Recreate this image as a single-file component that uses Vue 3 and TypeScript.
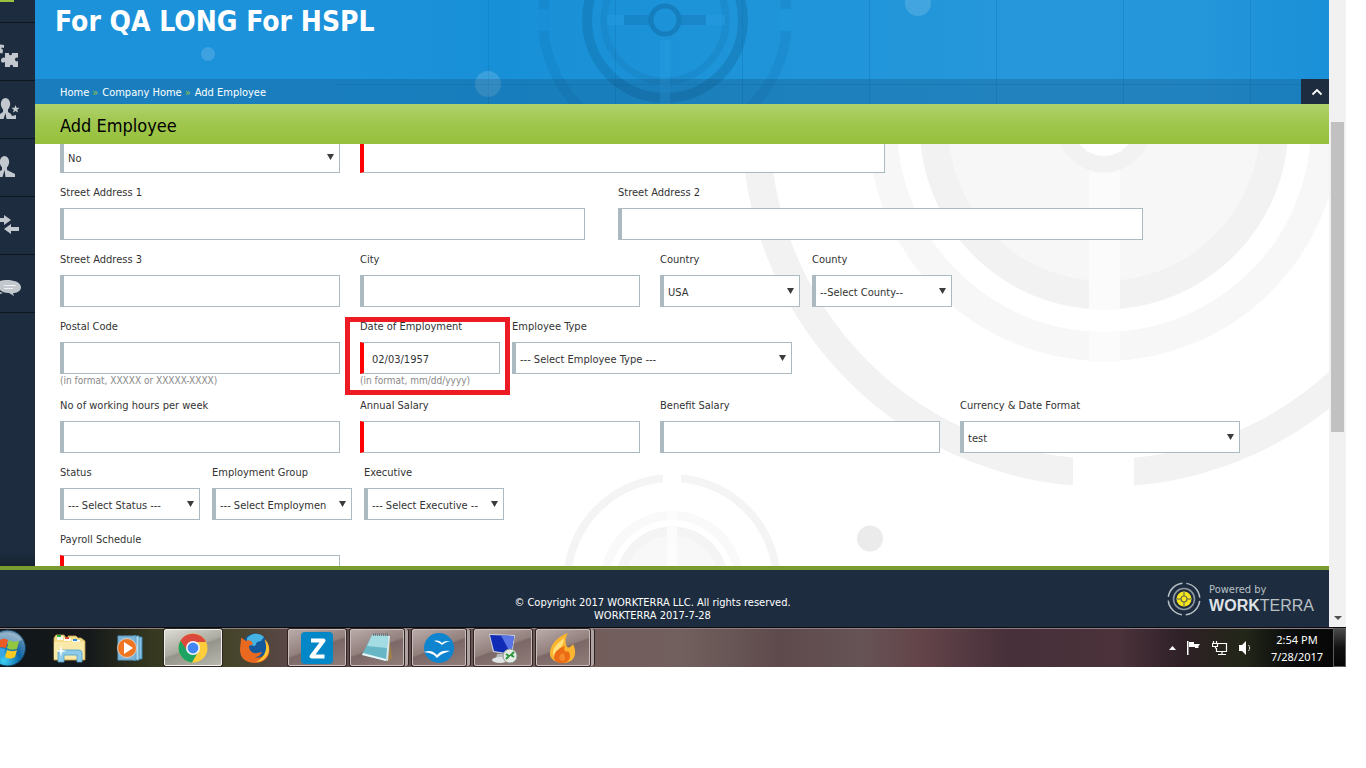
<script setup lang="ts">
interface Field {
  id: string
  label: string
  kind: 'text' | 'select'
  size: 'narrow' | 'mid' | 'wide'
  value?: string
  required?: boolean
  hint?: string
  marked?: boolean
  bare?: boolean
}

const rows: Field[][] = [
  [
    { id: 'opt', label: 'Option', kind: 'select', size: 'mid', value: 'No', bare: true },
    { id: 'detail', label: 'Details', kind: 'text', size: 'wide', required: true, bare: true },
  ],
  [
    { id: 'street1', label: 'Street Address 1', kind: 'text', size: 'wide' },
    { id: 'street2', label: 'Street Address 2', kind: 'text', size: 'wide' },
  ],
  [
    { id: 'street3', label: 'Street Address 3', kind: 'text', size: 'mid' },
    { id: 'city', label: 'City', kind: 'text', size: 'mid' },
    { id: 'country', label: 'Country', kind: 'select', size: 'narrow', value: 'USA' },
    { id: 'county', label: 'County', kind: 'select', size: 'narrow', value: '--Select County--' },
  ],
  [
    { id: 'postal', label: 'Postal Code', kind: 'text', size: 'mid', hint: '(in format, XXXXX or XXXXX-XXXX)' },
    { id: 'hired', label: 'Date of Employment', kind: 'text', size: 'narrow', value: '02/03/1957', required: true, hint: '(in format, mm/dd/yyyy)', marked: true },
    { id: 'type', label: 'Employee Type', kind: 'select', size: 'mid', value: '--- Select Employee Type ---' },
  ],
  [
    { id: 'hours', label: 'No of working hours per week', kind: 'text', size: 'mid' },
    { id: 'annual', label: 'Annual Salary', kind: 'text', size: 'mid', required: true },
    { id: 'benefit', label: 'Benefit Salary', kind: 'text', size: 'mid' },
    { id: 'currency', label: 'Currency & Date Format', kind: 'select', size: 'mid', value: 'test' },
  ],
  [
    { id: 'status', label: 'Status', kind: 'select', size: 'narrow', value: '--- Select Status ---' },
    { id: 'group', label: 'Employment Group', kind: 'select', size: 'narrow', value: '--- Select Employment Group ---' },
    { id: 'exec', label: 'Executive', kind: 'select', size: 'narrow', value: '--- Select Executive ---' },
  ],
  [{ id: 'payroll', label: 'Payroll Schedule', kind: 'text', size: 'mid', required: true }],
]

const gridLines = [453, 580, 707, 834, 961, 1088, 1215]
</script>

<template>
  <div class="screen">
    <div class="browser">
      <div class="page">
        <div class="upper">
          <nav class="side" aria-label="Sections">
            <a href="#" class="side-item first" aria-label="Dashboard"><span class="tab"></span></a>
            <a href="#" class="side-item" aria-label="Modules">
              <svg width="35" height="57" viewBox="0 23 35 57" fill="#c2c8ce">
                <path d="M0 44.500l4 .500v3l-2-.500c-1.500 1 0 2 1 2l-.500 4-2.500-.500z" />
                <path d="M5 53h4c-.8 3 3.500 3 3 0h6v5c-1.500-1-3 0-3 1.500s1.500 2.500 3 1.500v6h-5c.8-3-3.800-3-3 0H5v-5c-1.500 1-4 1-4-1.500S3.500 57 5 58z" />
              </svg>
            </a>
            <a href="#" class="side-item" aria-label="Featured employee">
              <svg width="35" height="57" viewBox="0 81 35 57" fill="#c2c8ce">
                <ellipse cx="5.500" cy="104" rx="4.700" ry="6" />
                <path d="M3 108h5v4l3 2 1 2 4-1v4H6.500l-1-6-2 6H0v-5l3-2z" />
                <path d="M15.500 105l1 2.800h3l-2.300 1.900.9 2.900-2.600-1.700-2.600 1.700.9-2.900-2.300-1.900h3z" />
              </svg>
            </a>
            <a href="#" class="side-item" aria-label="Employees">
              <svg width="35" height="57" viewBox="0 139 35 57" fill="#c2c8ce">
                <ellipse cx="4.500" cy="162" rx="4.700" ry="6" />
                <path d="M2 166h5v4l8 4v3H5.500l-1-7-2 7H0v-6l2-1z" />
              </svg>
            </a>
            <a href="#" class="side-item" aria-label="Transfers">
              <svg width="35" height="57" viewBox="0 197 35 57" fill="#c2c8ce">
                <path d="M0 218h4v-3l7 5-7 5v-3H0zM19 227h-8v-3l-7 5 7 5v-3h8z" />
              </svg>
            </a>
            <a href="#" class="side-item" aria-label="Messages">
              <svg width="35" height="57" viewBox="0 255 35 57" fill="#c2c8ce">
                <path d="M0 281c7-2 20-1 21 6 0 4-4 6-8 6l1 3-5-3c-4 0-7-1-9-3z" />
                <path d="M0 294l3-1-3-1z" />
                <path d="M4 285.500h12M4 288.500h9" stroke="#eef0f2" fill="none" />
              </svg>
            </a>
            <div class="side-end"></div>
          </nav>

          <main class="main">
            <header class="banner">
              <svg class="banner-art" width="1294" height="104" viewBox="0 0 1294 104" aria-hidden="true">
                <g stroke="#0b6fae" stroke-opacity=".3" fill="none">
                  <path v-for="x in gridLines" :key="x" :d="`M${x + .5} 0V104`" />
                  <path d="M300 84.500H1294" />
                </g>
                <g fill="none" stroke="#0b5c91">
                  <circle cx="630" cy="20" r="122" stroke-width="10" stroke-opacity=".13" />
                  <circle cx="630" cy="20" r="78" stroke-width="10" stroke-opacity=".28" />
                  <circle cx="630" cy="20" r="61" stroke-width="7" stroke-opacity=".14" />
                  <circle cx="630" cy="20" r="14" stroke-width="5" stroke-opacity=".36" />
                  <path d="M589 20h25M646 20h25" stroke-width="10" stroke-opacity=".2" />
                </g>
                <path d="M572 20h17M671 20h19M630 40v64" stroke="#249ae0" stroke-width="10" stroke-opacity=".6" />
                <path d="M503 9h12v22h-12z" fill="#188fd7" />
                <path d="M744 9h14v22h-14z" fill="#1f95da" />
                <g fill="#b7dcf3" fill-opacity=".22">
                  <circle cx="173" cy="54" r="7" /><circle cx="453" cy="84" r="13" /><circle cx="883" cy="3" r="13" />
                </g>
              </svg>
              <h1 class="company">For QA LONG For HSPL</h1>
              <div class="trail-bar">
                <nav class="trail" aria-label="Breadcrumb">
                  <a href="#">Home</a><i>»</i><a href="#">Company Home</a><i>»</i><a href="#">Add Employee</a>
                </nav>
                <button class="collapse" type="button" aria-label="Collapse header">
                  <svg width="12" height="8" viewBox="0 0 12 8"><path d="M1.500 6.500L6 2l4.500 4.500" fill="none" stroke="#fff" stroke-width="1.800" /></svg>
                </button>
              </div>
            </header>
            <h2 class="title">Add Employee</h2>

            <form class="form" @submit.prevent>
              <svg class="form-art" width="1294" height="422" viewBox="35 144 1294 422" aria-hidden="true">
                <circle cx="1104" cy="125" r="348" fill="none" stroke="#f2f2f2" stroke-width="28" />
                <path d="M1073 450h61v50h-61z" fill="#fff" />
                <circle cx="1104" cy="125" r="236" fill="#f7f7f7" />
                <circle cx="1104" cy="125" r="207" fill="#fff" />
                <circle cx="1104" cy="125" r="184.500" fill="#f2f2f2" />
                <circle cx="1104" cy="125" r="156" fill="#f7f7f7" />
                <path d="M1089 150h31v159h-31zM1089 332h31v30h-31z" fill="#fbfbfb" />
                <circle cx="1104" cy="125" r="47.500" fill="#f2f2f2" />
                <circle cx="1104" cy="125" r="31" fill="#fff" />
                <circle cx="672" cy="583" r="105" fill="none" stroke="#f4f4f4" stroke-width="8" />
                <path d="M663 470h18v20h-18z" fill="#fff" />
                <circle cx="672" cy="583" r="72" fill="#f9f9f9" />
                <circle cx="672" cy="583" r="63" fill="#fff" />
                <circle cx="672" cy="583" r="56.500" fill="#f4f4f4" />
                <circle cx="672" cy="583" r="47.500" fill="#f8f8f8" />
                <path d="M667 511h10v9h-10zM667 527h10v50h-10z" fill="#fcfcfc" />
                <circle cx="870" cy="538.500" r="13" fill="#ebebeb" />
              </svg>
              <div v-for="(row, n) in rows" :key="n" class="row">
                <div v-for="f in row" :key="f.id" class="field" :class="[f.size, { marked: f.marked }]">
                  <label v-if="!f.bare" :for="f.id">{{ f.label }}</label>
                  <span v-if="f.kind === 'select'" class="pick">
                    <select :id="f.id" class="control" :aria-label="f.bare ? f.label : undefined"><option>{{ f.value }}</option></select>
                  </span>
                  <input v-else :id="f.id" type="text" class="control" :class="{ required: f.required }" :value="f.value" :aria-label="f.bare ? f.label : undefined" />
                  <small v-if="f.hint">{{ f.hint }}</small>
                </div>
              </div>
            </form>
          </main>
        </div>

        <footer class="footer">
          <p class="legal">© Copyright 2017 WORKTERRA LLC. All rights reserved.<br />WORKTERRA 2017-7-28</p>
          <div class="brand">
            <svg width="34" height="34" viewBox="0 0 34 34" fill="none">
              <circle cx="17" cy="17" r="15.800" stroke="#b9bfc5" stroke-width="1.500" stroke-dasharray="20.800 4" stroke-dashoffset="-2" />
              <circle cx="17" cy="17" r="10.500" stroke="#8d959d" stroke-width="1.600" />
              <circle cx="17" cy="17" r="7.500" fill="#f7e51d" />
              <path d="M17 9v16M9 17h16" stroke="#8b8c4a" stroke-width="1.500" />
              <circle cx="17" cy="17" r="3" fill="#f7e51d" stroke="#6b6f48" stroke-width="1.200" />
            </svg>
            <div class="brand-text"><span>Powered by</span><strong>WORK<em>TERRA</em></strong></div>
          </div>
        </footer>
      </div>
      <div class="scroll" aria-hidden="true"><span class="thumb"></span><span class="down"></span></div>
    </div>

    <div class="taskbar">
      <button class="start" type="button" aria-label="Start">
        <svg width="26" height="40" viewBox="0 0 26 40">
          <defs><radialGradient id="orb" cx=".4" cy=".85" r=".9"><stop offset="0" stop-color="#3fd0f5" /><stop offset=".5" stop-color="#0c65a8" /><stop offset="1" stop-color="#7d9bb0" /></radialGradient></defs>
          <circle cx="7.500" cy="20" r="18" fill="url(#orb)" stroke="#123a58" />
          <path d="M-8 11C-2 2 17 2 22 12 12 17 2 17-8 15z" fill="#fff" fill-opacity=".35" />
          <path d="M0 12c3-2 6-1 8 0l-2 8c-3-1-5-1-8 0z" fill="#ee5a24" />
          <path d="M9 12c3 2 6 2 10 1l-2 8c-4 1-7 1-10-1z" fill="#93c83e" />
          <path d="M-3 21c3-1 6-1 8 0l-2 8c-3-1-4-1-6-1z" fill="#39a5e6" />
          <path d="M7 22c3 1 6 2 10 0l-2 7c-4 2-7 2-10 0z" fill="#fbc920" />
        </svg>
      </button>
      <button class="app plain folder" type="button" aria-label="Explorer">
        <svg width="34" height="32" viewBox="0 0 34 32">
          <path d="M2 28V6l2-3h8l2 3h2V4h8l2 2h3l4 3v19z" fill="#f3dc8a" stroke="#c9a653" stroke-width=".8" />
          <path d="M2 10h30v17H2z" fill="#f8e9a9" /><path d="M5 4h6v4H5zM12 6h7v3h-7zM20 8h8v2h-8z" fill="#fffdf0" />
          <path d="M5 3h4v2H5z" fill="#25b33b" /><path d="M13 5h4v2h-4z" fill="#df4a32" /><path d="M21 7h4v2h-4z" fill="#2e8bd6" />
          <path d="M6 30v-9c0-3 2-3 4-3h16c3 0 4 1 4 3v9h-5v-7H12v7z" fill="#8dcbe8" stroke="#4c9fc9" stroke-width=".8" />
          <path d="M9 13l1 5 5 1-5 1-1 5-1-5-4-1 4-1z" fill="#fff" />
        </svg>
      </button>
      <button class="app plain media" type="button" aria-label="Media player">
        <svg width="28" height="28" viewBox="0 0 28 28">
          <path d="M19 3h7v22h-7z" fill="#8ec5e6" stroke="#3681ae" /><path d="M17 2h6v24h-6z" fill="#b4dbef" stroke="#4c95be" />
          <path d="M2 2h18v24H2z" fill="#7fb6d8" stroke="#5c9cc4" />
          <circle cx="11" cy="14" r="9.500" fill="#f07521" stroke="#d8dfe5" stroke-width=".8" /><path d="M8 8l9 6-9 6z" fill="#fff" />
        </svg>
      </button>
      <button class="app active" type="button" aria-label="Chrome">
        <svg width="30" height="30" viewBox="0 0 30 30">
          <circle cx="15" cy="15" r="14.500" fill="#fdcd3b" />
          <path d="M2.400 7.800A14.500 14.500 0 0 1 28 9H15L8.700 18.500z" fill="#dc4a3d" />
          <path d="M2.400 7.800A14.500 14.500 0 0 0 14 29.500l6-10.500H10z" fill="#1da362" />
          <circle cx="15" cy="15" r="7" fill="#f4f6f8" /><circle cx="15" cy="15" r="5.400" fill="#4285f4" />
        </svg>
      </button>
      <button class="app plain fox" type="button" aria-label="Firefox">
        <svg width="32" height="32" viewBox="0 0 32 32">
          <circle cx="16" cy="14" r="12.500" fill="#14599b" /><path d="M8 6c4-5 12-6 17-1l-3 4-4 1-2 4-5-1-3-3z" fill="#45b4e4" />
          <path d="M2 6c2 0 3 2 5 3 3-2 6 0 7 3l-4 2c0 5 4 8 8 7 2 0 3-1 5-1-1 3-4 5-7 5 5 2 11-1 12-9 0-3-1-6-3-8 5 3 6 8 5 13-1 6-7 10-14 10C7 31 1 26 1 18c0-5 1-7 1-12z" fill="#e8691f" />
          <path d="M26 7c4 5 5 10 3 15-2 5-7 8-12 8 6-3 11-9 10-17z" fill="#fcc535" />
        </svg>
      </button>
      <button class="app" type="button" aria-label="Zimbra">
        <svg width="32" height="32" viewBox="0 0 32 32"><rect width="32" height="32" rx="4" fill="#0387c6" /><path d="M10 8.500h12.500L10.500 24.500H23.500" fill="none" stroke="#fff" stroke-width="4" stroke-linejoin="round" /></svg>
      </button>
      <button class="app stacked" type="button" aria-label="Notepad">
        <svg width="32" height="32" viewBox="0 0 32 32">
          <path d="M28 4l3 22-4 4z" fill="#a28148" /><path d="M12 3l17 1-2 25-8-2z" fill="#d7e9ec" />
          <path d="M11 3l16 1-2 25L1 23z" fill="#66b6c5" /><path d="M11 3l16 1-1 12L6 14z" fill="#a4dce4" />
          <path d="M1 23l24 6v-2L2 21z" fill="#e7f5f6" /><path d="M12 2.500h16" stroke="#6e7b80" stroke-width="3" stroke-dasharray="1 1" />
        </svg>
      </button>
      <button class="app stacked" type="button" aria-label="OpenOffice">
        <svg width="32" height="32" viewBox="0 0 32 32"><circle cx="16" cy="16" r="15" fill="#0f84cf" /><path d="M11 9c4-1 6 0 8 2 2-2 5-2 8-2-4 1-5 2-8 4-2-2-4-3-8-4zM1 20c6-2 9-1 13 3 3-4 7-5 13-4-6 2-9 3-13 7-3-4-7-5-13-6z" fill="#fff" /></svg>
      </button>
      <button class="app" type="button" aria-label="Remote desktop">
        <svg width="32" height="32" viewBox="0 0 32 32">
          <path d="M10 22h7l1 5H9z" fill="#b6bcc0" /><ellipse cx="13" cy="28" rx="8" ry="3" fill="#dfe3e4" /><path d="M2 2l26 1-3 20-19-3z" fill="#cdd4dc" /><path d="M3 3l24 1-3 18-17-3z" fill="#102bb5" /><path d="M14 3.500l13 .5-3 18z" fill="#5874e6" />
          <circle cx="23" cy="24" r="7" fill="#e6ebe6" stroke="#8c9690" /><path d="M19 22l3 2-3 3M27 20l-3 3 3 2" fill="none" stroke="#289638" stroke-width="2" />
        </svg>
      </button>
      <button class="app stacked" type="button" aria-label="Burn">
        <svg width="32" height="32" viewBox="0 0 32 32">
          <path d="M21 1C12 4 4 11 3 20c-1 7 6 11 13 11 8 0 13-5 12-12 0-2-1-5-2-7-2 3-4 4-6 3-2-4-2-9 1-14z" fill="#fbb52f" />
          <path d="M17 6c-5 5-11 8-11 15 0 2 1 4 2 5 0-8 9-9 9-20z" fill="#ffe07a" />
          <path d="M18 14c-6 2-11 6-11 11 0 4 4 6 8 6 5 0 8-3 8-7 0-2-1-4-2-5-1 1-2 1-3 0-1-2-1-3 0-5z" fill="#ec6b15" />
          <path d="M17 21c-4 1-6 4-4 7 2 2 6 1 5-2z" fill="#f58a2c" />
        </svg>
      </button>

      <div class="tray">
        <svg width="7" height="4" viewBox="0 0 7 4"><path d="M0 4l3.500-4L7 4z" fill="#fff" /></svg>
        <svg width="16" height="16" viewBox="0 0 16 16" fill="#fff"><path d="M1 1h1.500v14H1zM3 2h5v2h6l-2 3 1 1H9V7H3z" /></svg>
        <svg width="16" height="16" viewBox="0 0 16 16" fill="none" stroke="#fff"><path d="M6 3.500h8.500v8H4.500V8M6 14.500h8M10 12v2M1.500 1v3M4.500 1v3M.5 3.500h5v3h-5zM3.500 6.500v2" stroke-width="1.200" /></svg>
        <svg width="14" height="16" viewBox="0 0 14 16"><path d="M1 5h3l4-4v14l-4-4H1z" fill="#fff" /><path d="M10.500 5c1.500 2 1.500 4 0 6" fill="none" stroke="#ddd" /></svg>
      </div>
      <div class="clock"><span>2:54 PM</span><span>7/28/2017</span></div>
      <button class="show-desktop" type="button" aria-label="Show desktop"></button>
    </div>
  </div>
</template>

<style>
body { margin: 0; background: #fff; }
</style>

<style scoped>
*, *::after { box-sizing: border-box; }
.screen { display: flex; flex-direction: column; height: calc(100vh - 101px); margin-right: 20px; overflow: hidden; font-family: "DejaVu Sans Condensed", "DejaVu Sans", sans-serif; font-size: 11px; color: #333; }
.browser { flex: 1; min-height: 0; display: flex; }
.page { flex: 1; min-width: 0; display: flex; flex-direction: column; }
.upper { flex: 1; min-height: 0; display: flex; }
button { border: 0; padding: 0; background: none; display: flex; align-items: center; justify-content: center; }
a { color: inherit; text-decoration: none; }
svg { display: block; flex: none; }

.side { width: 35px; flex: none; display: flex; flex-direction: column; background: #1d2d3f; overflow: hidden; }
.side-item { height: 58px; flex: none; border-bottom: 1px solid #0d151f; }
.side-item.first { height: 23px; }
.tab { display: block; width: 14px; height: 2px; background: #99c23f; }
.side-end { flex: 1; background: linear-gradient(#1d2d3f 94%, #17222f); }

.main { flex: 1; min-width: 0; display: flex; flex-direction: column; }
.banner { position: relative; flex: none; display: flex; flex-direction: column; overflow: hidden; background: linear-gradient(90deg, #1c92da 0%, #1c92da 22%, #1890d7 36%, #2095d9 60%, #2697da 78%, #2496da 90%, #1a90d8 100%); }
.banner-art { position: absolute; left: 0; top: 0; }
.company { position: relative; margin: 0; height: 79px; padding: 5px 20px; font-size: 28px; line-height: 34px; font-weight: bold; color: #fff; }
.trail-bar { position: relative; height: 25px; display: flex; justify-content: space-between; background: rgba(20, 50, 80, .2); }
.trail { display: flex; align-items: center; padding: 1px 0 0 25px; color: #fff; }
.trail i { width: 13px; padding-left: 3px; font-style: normal; color: #99c23f; }
.collapse { width: 28px; background: #1d2d3f; padding-left: 4px; }
.title { flex: none; height: 40px; margin: 0; padding: 4px 25px 0; font-size: 18px; line-height: 36px; font-weight: normal; color: #000; background: linear-gradient(#b0d16c, #9fc74c 50%, #97c03d); }

.form { position: relative; flex: 1; min-height: 0; overflow: hidden; padding-left: 25px; }
.form-art { position: absolute; right: 0; top: 0; }
.row { display: flex; align-items: flex-start; }
.row:nth-of-type(1) { margin-top: -3px; }
.field { position: relative; display: flex; flex-direction: column; flex: none; }
.narrow { width: 140px; margin-right: 12px; }
.mid { width: 280px; margin-right: 20px; }
.wide { width: 525px; margin-right: 33px; }
label { height: 35px; padding-top: 4px; line-height: 31px; white-space: nowrap; }
.control { width: 100%; height: 32px; margin: 0; padding: 2px 8px 0; border: 1px solid #abb9c1; border-left-width: 4px; border-radius: 0; background: #fff; font: inherit; color: #333; outline: 0; appearance: none; }
.control.required { border-left-color: #f00; }
.pick { position: relative; display: block; }
.pick .control { padding: 2px 25px 0 4px; text-overflow: clip; }
.pick::after { content: ""; position: absolute; right: 6px; top: 13px; width: 7px; height: 6px; background: #3c3c3c; clip-path: polygon(0 0, 100% 0, 50% 100%); pointer-events: none; }
small { height: 12px; padding-top: 1px; font-size: 10px; line-height: 12px; color: #888; white-space: nowrap; }
.marked::after { content: ""; position: absolute; left: -15px; top: 10px; width: 165px; height: 78px; border: 5px solid #ed1c24; pointer-events: none; }

.footer { flex: none; height: 61px; display: grid; grid-template-columns: 1fr auto 1fr; padding-right: 15px; border-top: 4px solid #7a9b2e; background: #1d2d3f; color: #fff; }
.legal { grid-column: 2; margin: 0; padding: 26px 9px 0 0; line-height: 13px; text-align: center; }
.brand { display: flex; justify-content: flex-end; align-items: flex-start; gap: 8px; padding-top: 12px; }
.brand-text { display: flex; flex-direction: column; padding-top: 1px; font-family: "Liberation Sans", sans-serif; color: #dfe3e6; }
.brand-text span { font-family: "DejaVu Sans Condensed", sans-serif; line-height: 14px; color: #b9c0c6; }
.brand-text strong { font-size: 16px; line-height: 18px; }
.brand-text em { font-style: normal; font-weight: normal; color: #b9c0c6; }

.scroll { position: relative; width: 17px; flex: none; padding: 122px 2px 0; background: #f1f1f1; }
.thumb { display: block; height: 310px; background: #c1c1c1; }
.down { position: absolute; left: 5px; bottom: 7px; width: 8px; height: 4px; background: #505050; clip-path: polygon(0 0, 100% 0, 50% 100%); }

.taskbar { flex: none; height: 40px; display: flex; align-items: stretch; border-top: 1px solid #0c0c10; box-shadow: inset 0 1px #8c8080; background: linear-gradient(90deg, #11161b 0, #15191a 90px, #35371f 150px, #45442a 230px, #5b4748 290px, #725c5a 560px, #72605e 680px, #5e4a4c 780px, #665355 860px, #634449 920px, #47303a 1010px, #4b323b 1120px, #2f2027 1180px, #222618 1245px, #0b0c0c 1290px, #050505 100%); }
.start { width: 26px; overflow: hidden; }
.app { width: 58px; flex: none; margin: 1px 4px 1px 0; border: 1px solid #c9bebb; border-radius: 2px; background: linear-gradient(160deg, #b9aaa8 0, #92807d 48%, #7c6866 52%, #907c79 100%); box-shadow: 0 0 0 1px #2f2424; }
.app.plain { border-color: transparent; background: none; box-shadow: none; margin: 1px 0; }
.app.folder { width: 86px; }
.app.media { width: 36px; margin-right: 16px; }
.app.fox { width: 66px; }
.app.active { margin-right: 0; border-color: #f1f1ec; background: linear-gradient(160deg, #dcdcd5, #aaaaa0 48%, #94948a 52%, #b8b8ae); }
.app.stacked { width: 54px; margin-right: 8px; box-shadow: 0 0 0 1px #2f2424, 4px 0 0 0 #b0a2a0, 5px 0 0 0 #2f2424; }
.tray { margin-left: auto; display: flex; align-items: center; gap: 10px; padding-right: 18px; }
.clock { width: 54px; display: flex; flex-direction: column; align-items: center; padding-top: 3px; font-family: "Noto Sans", sans-serif; font-size: 11px; line-height: 17px; color: #fff; }
.show-desktop { width: 13px; margin-left: 9px; border: 1px solid #5c5c5c; background: linear-gradient(#4a4a4a, #111 50%, #050505); }
</style>
